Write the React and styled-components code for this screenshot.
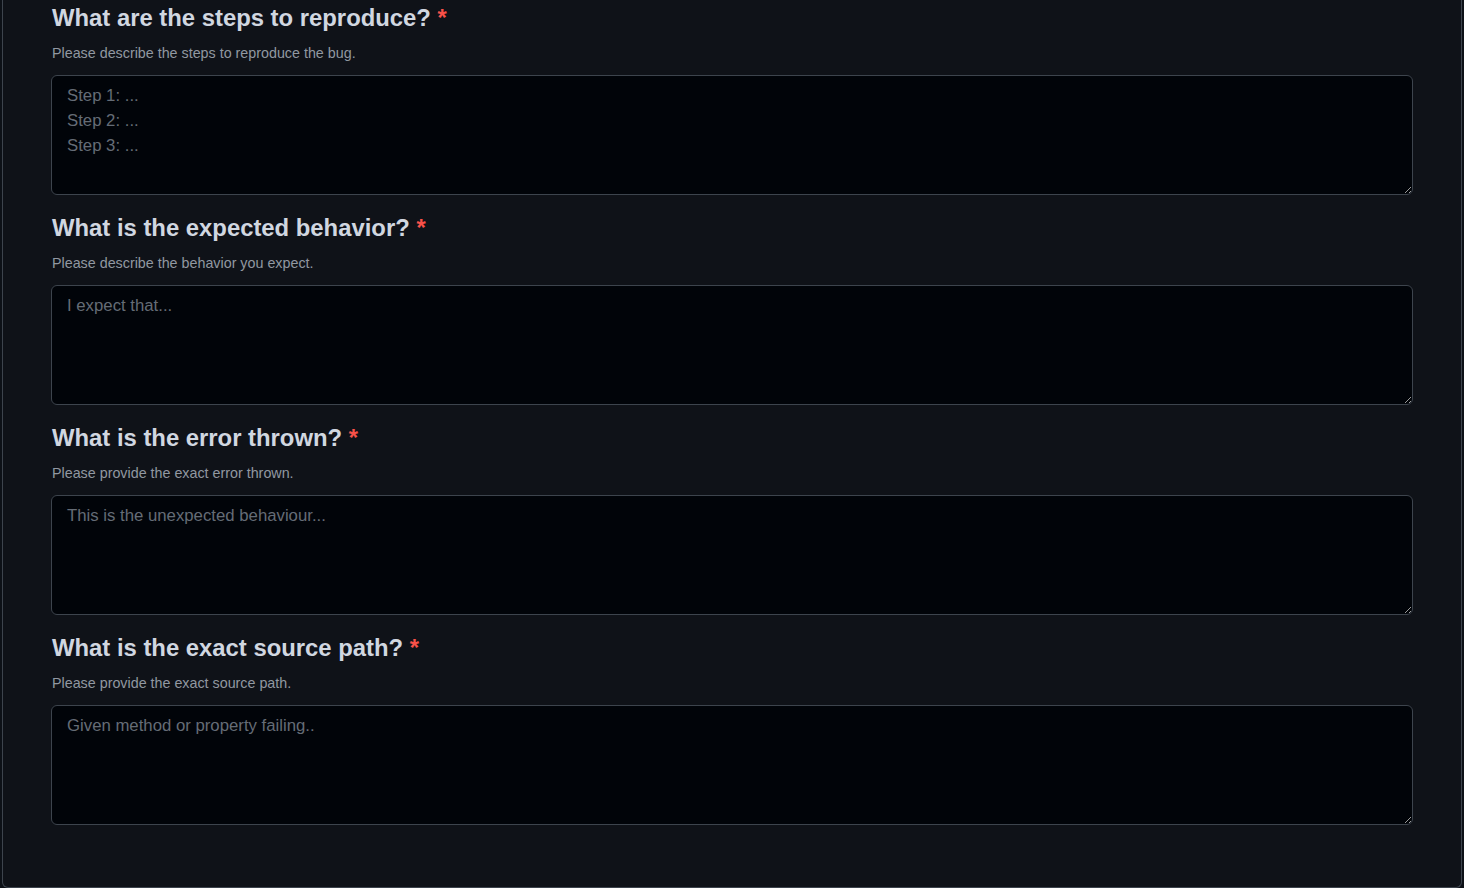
import React from "react";
import styled, { createGlobalStyle } from "styled-components";

const GlobalStyle = createGlobalStyle`
  html, body {
    margin: 0;
    padding: 0;
    background: #0d1117;
    color-scheme: dark;
  }
  body {
    font-family: "Liberation Sans", Arial, sans-serif;
  }
`;

const fields = [
  {
    id: "steps",
    title: "What are the steps to reproduce?",
    description: "Please describe the steps to reproduce the bug.",
    placeholder: "Step 1: ...\nStep 2: ...\nStep 3: ...",
  },
  {
    id: "expected",
    title: "What is the expected behavior?",
    description: "Please describe the behavior you expect.",
    placeholder: "I expect that...",
  },
  {
    id: "error",
    title: "What is the error thrown?",
    description: "Please provide the exact error thrown.",
    placeholder: "This is the unexpected behaviour...",
  },
  {
    id: "path",
    title: "What is the exact source path?",
    description: "Please provide the exact source path.",
    placeholder: "Given method or property failing..",
  },
];

export default function App() {
  return (
    <>
      <GlobalStyle />
      <StyledPanel>
        {fields.map((field) => (
          <StyledField key={field.id}>
            <StyledLabel htmlFor={field.id}>
              {field.title} <StyledRequired>*</StyledRequired>
            </StyledLabel>
            <StyledHint>{field.description}</StyledHint>
            <StyledTextarea id={field.id} placeholder={field.placeholder} />
          </StyledField>
        ))}
      </StyledPanel>
    </>
  );
}

const StyledPanel = styled.div`
  box-sizing: border-box;
  min-height: 100vh;
  margin: 0 2px;
  padding: 3px 48px 40px;
  border: 1px solid #3d444d;
  border-top: none;
  border-radius: 0 0 6px 6px;
  background: #0f1218;
`;

const StyledField = styled.div`
  display: flex;
  flex-direction: column;
  margin-bottom: 18px;
`;

const StyledLabel = styled.label`
  display: block;
  padding-left: 1px;
  font-size: 23.85px;
  line-height: 30px;
  font-weight: 700;
  color: #d1d7e0;
  margin-bottom: 10px;
`;

const StyledRequired = styled.span`
  color: #f85149;
`;

const StyledHint = styled.p`
  margin: 0 0 11px;
  padding-left: 1px;
  font-size: 14.3px;
  line-height: 21px;
  color: #9198a1;
`;

const StyledTextarea = styled.textarea`
  box-sizing: border-box;
  width: 100%;
  height: 120px;
  padding: 7px 15px;
  font-family: "Liberation Sans", Arial, sans-serif;
  font-size: 16.75px;
  line-height: 25px;
  color: #d1d7e0;
  background: #010409;
  border: 1px solid #3d444d;
  border-radius: 6px;
  outline: none;
  resize: vertical;

  &::placeholder {
    color: #656c76;
  }
`;
